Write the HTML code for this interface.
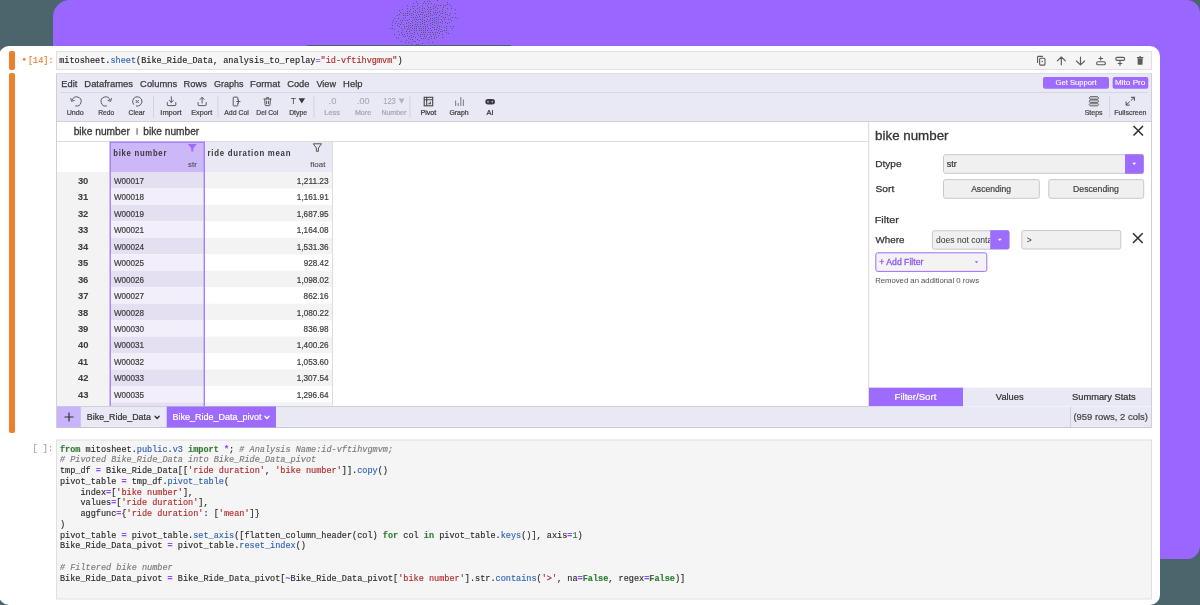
<!DOCTYPE html>
<html><head><meta charset="utf-8"><title>Mito</title>
<style>html,body{margin:0;padding:0;width:1200px;height:605px;overflow:hidden;background:#4b656d;font-family:"Liberation Sans",sans-serif}</style>
</head><body>
<svg width="1200" height="605" viewBox="0 0 1200 605" style="display:block;will-change:transform">
<rect x="0" y="0" width="1200" height="605" fill="#4b656d" />
<path d="M53,16.7 A16.7,16.7 0 0 1 69.7,0 L1186.8,0 A13.2,13.2 0 0 1 1200,13.2 L1200,545.8 A13.2,13.2 0 0 1 1186.8,559 L69.7,559 A16.7,16.7 0 0 1 53,542.3 Z" fill="#9966ff"/>
<path fill="#4d5f68" d="M409,36h1v1h-1zM430,25h1v1h-1zM449,15h1v1h-1zM432,22h1v1h-1zM427,30h1v1h-1zM417,8h1v1h-1zM430,18h1v1h-1zM425,38h1v1h-1zM403,24h1v1h-1zM424,15h1v1h-1zM434,22h1v1h-1zM431,30h1v1h-1zM422,23h1v1h-1zM445,22h1v1h-1zM430,7h1v1h-1zM415,12h1v1h-1zM415,17h1v1h-1zM413,14h1v1h-1zM425,3h1v1h-1zM419,7h1v1h-1zM413,11h1v1h-1zM412,33h1v1h-1zM428,11h1v1h-1zM435,10h1v1h-1zM423,26h1v1h-1zM420,26h1v1h-1zM434,25h1v1h-1zM411,30h1v1h-1zM440,22h1v1h-1zM412,25h1v1h-1zM426,36h1v1h-1zM442,23h1v1h-1zM446,30h1v1h-1zM427,26h1v1h-1zM406,23h1v1h-1zM404,34h1v1h-1zM415,37h1v1h-1zM427,24h1v1h-1zM424,17h1v1h-1zM425,30h1v1h-1zM437,27h1v1h-1zM424,34h1v1h-1zM418,14h1v1h-1zM446,26h1v1h-1zM403,18h1v1h-1zM423,32h1v1h-1zM406,26h1v1h-1zM414,28h1v1h-1zM422,17h1v1h-1zM409,11h1v1h-1zM432,32h1v1h-1zM429,37h1v1h-1zM425,11h1v1h-1zM420,22h1v1h-1zM431,9h1v1h-1zM415,21h1v1h-1zM423,3h1v1h-1zM415,24h1v1h-1zM442,11h1v1h-1zM416,30h1v1h-1zM407,29h1v1h-1zM392,28h1v1h-1zM446,32h1v1h-1zM428,16h1v1h-1zM401,28h1v1h-1zM407,20h1v1h-1zM416,28h1v1h-1zM445,14h1v1h-1zM399,26h1v1h-1zM401,22h1v1h-1zM407,33h1v1h-1zM394,29h1v1h-1zM408,22h1v1h-1zM441,16h1v1h-1zM410,27h1v1h-1zM430,13h1v1h-1zM426,16h1v1h-1zM412,22h1v1h-1zM419,28h1v1h-1zM401,41h1v1h-1zM421,32h1v1h-1zM436,17h1v1h-1zM423,12h1v1h-1zM422,6h1v1h-1zM424,24h1v1h-1zM451,20h1v1h-1zM401,32h1v1h-1zM433,34h1v1h-1zM420,19h1v1h-1zM427,19h1v1h-1zM413,17h1v1h-1zM437,12h1v1h-1zM398,23h1v1h-1zM400,20h1v1h-1zM420,24h1v1h-1zM449,22h1v1h-1zM435,7h1v1h-1zM421,38h1v1h-1zM414,32h1v1h-1zM419,16h1v1h-1zM431,3h1v1h-1zM422,34h1v1h-1zM416,19h1v1h-1zM442,13h1v1h-1zM413,8h1v1h-1zM399,34h1v1h-1zM410,9h1v1h-1zM453,26h1v1h-1zM427,9h1v1h-1zM424,22h1v1h-1zM405,36h1v1h-1zM442,21h1v1h-1zM419,11h1v1h-1zM439,26h1v1h-1zM408,38h1v1h-1zM410,39h1v1h-1zM436,37h1v1h-1zM431,38h1v1h-1zM418,35h1v1h-1zM428,21h1v1h-1zM430,20h1v1h-1zM438,22h1v1h-1zM422,8h1v1h-1zM422,19h1v1h-1zM430,28h1v1h-1zM443,17h1v1h-1zM414,26h1v1h-1zM428,39h1v1h-1zM411,35h1v1h-1zM419,30h1v1h-1zM413,3h1v1h-1zM408,42h1v1h-1zM417,24h1v1h-1zM409,19h1v1h-1zM417,5h1v1h-1zM450,18h1v1h-1zM445,17h1v1h-1zM430,34h1v1h-1zM420,34h1v1h-1zM405,42h1v1h-1zM447,2h1v1h-1zM402,30h1v1h-1zM433,12h1v1h-1zM434,18h1v1h-1zM419,9h1v1h-1zM411,17h1v1h-1zM408,25h1v1h-1zM390,28h1v1h-1zM412,6h1v1h-1zM411,15h1v1h-1zM432,27h1v1h-1zM405,17h1v1h-1zM412,20h1v1h-1zM402,34h1v1h-1zM432,18h1v1h-1zM404,28h1v1h-1zM425,26h1v1h-1zM402,9h1v1h-1zM405,15h1v1h-1zM426,14h1v1h-1zM441,26h1v1h-1zM452,28h1v1h-1zM443,5h1v1h-1zM439,11h1v1h-1zM447,23h1v1h-1zM409,29h1v1h-1zM411,43h1v1h-1zM441,29h1v1h-1zM421,30h1v1h-1zM436,14h1v1h-1zM452,17h1v1h-1zM402,20h1v1h-1zM395,23h1v1h-1zM424,20h1v1h-1zM433,6h1v1h-1zM440,5h1v1h-1zM442,9h1v1h-1zM406,31h1v1h-1zM429,1h1v1h-1zM417,22h1v1h-1zM414,6h1v1h-1zM455,13h1v1h-1zM437,25h1v1h-1zM425,28h1v1h-1zM415,41h1v1h-1zM407,8h1v1h-1zM435,32h1v1h-1zM447,14h1v1h-1zM428,3h1v1h-1zM430,32h1v1h-1zM428,32h1v1h-1zM437,0h1v1h-1zM430,23h1v1h-1zM392,22h1v1h-1zM416,26h1v1h-1zM417,39h1v1h-1zM422,10h1v1h-1zM441,19h1v1h-1zM426,21h1v1h-1zM410,23h1v1h-1zM416,44h1v1h-1zM399,10h1v1h-1zM436,19h1v1h-1zM417,17h1v1h-1zM418,44h1v1h-1zM417,33h1v1h-1zM445,5h1v1h-1zM422,14h1v1h-1zM439,33h1v1h-1zM444,27h1v1h-1zM434,36h1v1h-1zM417,3h1v1h-1zM409,14h1v1h-1zM397,15h1v1h-1zM436,23h1v1h-1zM444,19h1v1h-1zM410,33h1v1h-1zM394,34h1v1h-1zM424,1h1v1h-1zM415,10h1v1h-1zM407,15h1v1h-1zM427,1h1v1h-1zM403,36h1v1h-1zM405,20h1v1h-1zM416,15h1v1h-1zM418,19h1v1h-1zM405,13h1v1h-1zM438,35h1v1h-1zM438,17h1v1h-1zM436,21h1v1h-1zM393,20h1v1h-1zM434,20h1v1h-1zM403,15h1v1h-1zM411,37h1v1h-1zM412,28h1v1h-1zM432,15h1v1h-1zM438,5h1v1h-1zM419,40h1v1h-1zM430,15h1v1h-1zM442,37h1v1h-1zM407,11h1v1h-1zM436,29h1v1h-1zM434,38h1v1h-1zM442,31h1v1h-1zM439,28h1v1h-1zM396,37h1v1h-1zM437,32h1v1h-1zM425,32h1v1h-1zM448,19h1v1h-1zM418,26h1v1h-1zM451,6h1v1h-1zM421,28h1v1h-1zM411,13h1v1h-1zM398,31h1v1h-1zM438,30h1v1h-1zM437,8h1v1h-1zM432,24h1v1h-1zM412,39h1v1h-1zM438,19h1v1h-1zM450,13h1v1h-1zM450,26h1v1h-1zM407,13h1v1h-1zM413,41h1v1h-1zM422,21h1v1h-1zM428,7h1v1h-1zM414,34h1v1h-1zM434,29h1v1h-1zM400,12h1v1h-1zM423,38h1v1h-1zM439,15h1v1h-1zM455,17h1v1h-1zM394,18h1v1h-1zM409,31h1v1h-1zM435,12h1v1h-1zM428,13h1v1h-1zM413,36h1v1h-1zM435,34h1v1h-1zM432,42h1v1h-1zM421,12h1v1h-1zM408,27h1v1h-1zM442,34h1v1h-1zM417,12h1v1h-1zM436,5h1v1h-1zM455,9h1v1h-1zM403,13h1v1h-1zM396,21h1v1h-1zM428,28h1v1h-1zM414,19h1v1h-1zM428,42h1v1h-1zM444,30h1v1h-1zM422,43h1v1h-1zM446,28h1v1h-1zM407,5h1v1h-1zM449,4h1v1h-1zM416,1h1v1h-1zM440,31h1v1h-1zM424,36h1v1h-1zM443,7h1v1h-1zM407,35h1v1h-1zM414,30h1v1h-1zM398,18h1v1h-1zM434,27h1v1h-1zM404,26h1v1h-1zM400,24h1v1h-1zM423,28h1v1h-1zM432,20h1v1h-1zM424,8h1v1h-1zM397,25h1v1h-1zM427,34h1v1h-1zM420,14h1v1h-1zM431,36h1v1h-1zM398,38h1v1h-1zM447,4h1v1h-1zM448,33h1v1h-1zM445,12h1v1h-1zM457,18h1v1h-1zM451,8h1v1h-1zM447,8h1v1h-1zM423,30h1v1h-1zM433,8h1v1h-1zM430,11h1v1h-1zM392,25h1v1h-1zM420,36h1v1h-1zM429,9h1v1h-1zM434,14h1v1h-1zM440,13h1v1h-1zM399,14h1v1h-1zM410,25h1v1h-1zM406,40h1v1h-1zM434,4h1v1h-1zM427,5h1v1h-1z"/>
<rect x="307" y="45" width="204" height="1" fill="#4b656d" />
<rect x="-1" y="46" width="1161" height="559" fill="#ffffff" rx="10" />
<rect x="9" y="51" width="6" height="19" fill="#ee7f2d" rx="2" />
<text x="28.0" y="63.2" font-size="9.0" fill="#ec7d2e" stroke="#ec7d2e" stroke-width="0.15" font-family='"Liberation Mono", monospace' textLength="25.63" lengthAdjust="spacingAndGlyphs">[14]:</text>
<circle cx="24.2" cy="59.4" r="1.35" fill="#ec7d2e"/>
<rect x="56.5" y="51.5" width="1095" height="18" fill="#f5f5f5" stroke="#e0e0e0" stroke-width="1" />
<text x="59.19" y="62.8" font-size="9.0" font-family='"Liberation Mono", monospace' fill="#222" stroke="#222" stroke-width="0.15" textLength="343.43" lengthAdjust="spacingAndGlyphs">mitosheet.<tspan fill="#2f63b6" stroke="#2f63b6">sheet</tspan>(Bike_Ride_Data, analysis_to_replay<tspan fill="#8a4dff" stroke="#8a4dff">=</tspan><tspan fill="#b22b2b" stroke="#b22b2b">"id-vftihvgmvm"</tspan>)</text>
<g fill="none" stroke="#5c5c5c" stroke-width="1.1" stroke-linecap="round" stroke-linejoin="round">
<path d="M1037.6,62.4 L1037.6,57.2 Q1037.6,56.4 1038.4,56.4 L1042.4,56.4"/><rect x="1039.6" y="58.3" width="5.4" height="6.8" rx="1"/>
</g>
<circle cx="1042.2" cy="61.6" r="0.75" fill="#5c5c5c"/>
<g fill="none" stroke="#5c5c5c" stroke-width="1.15" stroke-linecap="round" stroke-linejoin="round">
<path d="M1061.3,64.8 L1061.3,57.3 M1057.3,60.8 L1061.3,57 L1065.4,60.8"/>
<path d="M1080.5,57.1 L1080.5,64.6 M1076.4,61 L1080.5,64.8 L1084.6,61"/>
<rect x="1096.7" y="61.7" width="8.6" height="3" rx="1.3"/><path d="M1100.7,56.7 L1100.7,59.9 M1099,58.5 L1102.6,58.5"/>
<rect x="1115.8" y="57.4" width="8.8" height="3" rx="1.3"/><path d="M1120,61.3 L1120,65.3 M1118.2,63.5 L1121.8,63.5"/>
</g>
<path d="M1137,57 L1143.3,57 L1143.3,58.2 L1137,58.2 Z M1139.2,56.2 L1141.1,56.2 L1141.1,57 L1139.2,57 Z M1137.6,58.6 L1142.7,58.6 L1142.5,64.3 Q1142.5,64.8 1142,64.8 L1138.2,64.8 Q1137.7,64.8 1137.7,64.3 Z" fill="#5c5c5c"/>
<rect x="9" y="73" width="6" height="360" fill="#ee7f2d" rx="2" />
<rect x="56.5" y="73.8" width="1095" height="353.7" fill="#ffffff" stroke="#cfcfd6" stroke-width="1" />
<rect x="57" y="74.3" width="1094" height="46.7" fill="#e9e9f6" />
<line x1="60" y1="92.5" x2="1148" y2="92.5" stroke="#d6d6e4" stroke-width="1"/>
<line x1="57" y1="121.5" x2="1151" y2="121.5" stroke="#d0d0d8" stroke-width="1"/>
<text x="61.34" y="87.1" font-size="9.0" fill="#3a3a3a" font-family='"Liberation Sans", sans-serif' stroke="#3a3a3a" stroke-width="0.25" textLength="15.98" lengthAdjust="spacingAndGlyphs" >Edit</text>
<text x="84.33" y="87.1" font-size="9.0" fill="#3a3a3a" font-family='"Liberation Sans", sans-serif' stroke="#3a3a3a" stroke-width="0.25" textLength="48.71" lengthAdjust="spacingAndGlyphs" >Dataframes</text>
<text x="140.12" y="87.1" font-size="9.0" fill="#3a3a3a" font-family='"Liberation Sans", sans-serif' stroke="#3a3a3a" stroke-width="0.25" textLength="37.02" lengthAdjust="spacingAndGlyphs" >Columns</text>
<text x="183.64" y="87.1" font-size="9.0" fill="#3a3a3a" font-family='"Liberation Sans", sans-serif' stroke="#3a3a3a" stroke-width="0.25" textLength="23.30" lengthAdjust="spacingAndGlyphs" >Rows</text>
<text x="214.05" y="87.1" font-size="9.0" fill="#3a3a3a" font-family='"Liberation Sans", sans-serif' stroke="#3a3a3a" stroke-width="0.25" textLength="29.58" lengthAdjust="spacingAndGlyphs" >Graphs</text>
<text x="250.12" y="87.1" font-size="9.0" fill="#3a3a3a" font-family='"Liberation Sans", sans-serif' stroke="#3a3a3a" stroke-width="0.25" textLength="30.05" lengthAdjust="spacingAndGlyphs" >Format</text>
<text x="287.23" y="87.1" font-size="9.0" fill="#3a3a3a" font-family='"Liberation Sans", sans-serif' stroke="#3a3a3a" stroke-width="0.25" textLength="22.18" lengthAdjust="spacingAndGlyphs" >Code</text>
<text x="316.46" y="87.1" font-size="9.0" fill="#3a3a3a" font-family='"Liberation Sans", sans-serif' stroke="#3a3a3a" stroke-width="0.25" textLength="19.52" lengthAdjust="spacingAndGlyphs" >View</text>
<text x="343.13" y="87.1" font-size="9.0" fill="#3a3a3a" font-family='"Liberation Sans", sans-serif' stroke="#3a3a3a" stroke-width="0.25" textLength="19.37" lengthAdjust="spacingAndGlyphs" >Help</text>
<rect x="1043" y="77" width="66" height="11.7" fill="#9d6cff" rx="2" />
<text x="1055.52" y="85.1" font-size="7.9" fill="#ffffff" font-family='"Liberation Sans", sans-serif' stroke="#ffffff" stroke-width="0.1" textLength="41.04" lengthAdjust="spacingAndGlyphs" >Get Support</text>
<rect x="1112.6" y="77" width="35.7" height="11.7" fill="#9d6cff" rx="2" />
<text x="1115.03" y="85.1" font-size="7.9" fill="#ffffff" font-family='"Liberation Sans", sans-serif' stroke="#ffffff" stroke-width="0.1" textLength="30.31" lengthAdjust="spacingAndGlyphs" >Mito Pro</text>
<text x="66.65" y="114.5" font-size="7.0" fill="#454545" font-family='"Liberation Sans", sans-serif' stroke="#454545" stroke-width="0.22" textLength="17.05" lengthAdjust="spacingAndGlyphs" >Undo</text>
<text x="98.15" y="114.5" font-size="7.0" fill="#454545" font-family='"Liberation Sans", sans-serif' stroke="#454545" stroke-width="0.22" textLength="16.03" lengthAdjust="spacingAndGlyphs" >Redo</text>
<text x="128.45" y="114.5" font-size="7.0" fill="#454545" font-family='"Liberation Sans", sans-serif' stroke="#454545" stroke-width="0.22" textLength="16.46" lengthAdjust="spacingAndGlyphs" >Clear</text>
<text x="160.31" y="114.5" font-size="7.0" fill="#454545" font-family='"Liberation Sans", sans-serif' stroke="#454545" stroke-width="0.22" textLength="21.25" lengthAdjust="spacingAndGlyphs" >Import</text>
<text x="191.21" y="114.5" font-size="7.0" fill="#454545" font-family='"Liberation Sans", sans-serif' stroke="#454545" stroke-width="0.22" textLength="20.95" lengthAdjust="spacingAndGlyphs" >Export</text>
<text x="224.29" y="114.5" font-size="7.0" fill="#454545" font-family='"Liberation Sans", sans-serif' stroke="#454545" stroke-width="0.22" textLength="24.47" lengthAdjust="spacingAndGlyphs" >Add Col</text>
<text x="256.35" y="114.5" font-size="7.0" fill="#454545" font-family='"Liberation Sans", sans-serif' stroke="#454545" stroke-width="0.22" textLength="22.00" lengthAdjust="spacingAndGlyphs" >Del Col</text>
<text x="289.14" y="114.5" font-size="7.0" fill="#454545" font-family='"Liberation Sans", sans-serif' stroke="#454545" stroke-width="0.22" textLength="17.97" lengthAdjust="spacingAndGlyphs" >Dtype</text>
<text x="324.39" y="114.5" font-size="7.0" fill="#a6a6ad" font-family='"Liberation Sans", sans-serif' stroke="#a6a6ad" stroke-width="0.22" textLength="15.62" lengthAdjust="spacingAndGlyphs" >Less</text>
<text x="354.91" y="114.5" font-size="7.0" fill="#a6a6ad" font-family='"Liberation Sans", sans-serif' stroke="#a6a6ad" stroke-width="0.22" textLength="16.31" lengthAdjust="spacingAndGlyphs" >More</text>
<text x="381.43" y="114.5" font-size="7.0" fill="#a6a6ad" font-family='"Liberation Sans", sans-serif' stroke="#a6a6ad" stroke-width="0.22" textLength="24.89" lengthAdjust="spacingAndGlyphs" >Number</text>
<text x="420.42" y="114.5" font-size="7.0" fill="#333" font-family='"Liberation Sans", sans-serif' stroke="#333" stroke-width="0.22" textLength="15.84" lengthAdjust="spacingAndGlyphs" >Pivot</text>
<text x="449.40" y="114.5" font-size="7.0" fill="#404040" font-family='"Liberation Sans", sans-serif' stroke="#404040" stroke-width="0.22" textLength="19.25" lengthAdjust="spacingAndGlyphs" >Graph</text>
<text x="486.59" y="114.5" font-size="7.0" fill="#333" font-family='"Liberation Sans", sans-serif' stroke="#333" stroke-width="0.22" textLength="7.11" lengthAdjust="spacingAndGlyphs" >AI</text>
<text x="1084.68" y="114.5" font-size="7.0" fill="#454545" font-family='"Liberation Sans", sans-serif' stroke="#454545" stroke-width="0.22" textLength="17.87" lengthAdjust="spacingAndGlyphs" >Steps</text>
<text x="1114.13" y="114.5" font-size="7.0" fill="#454545" font-family='"Liberation Sans", sans-serif' stroke="#454545" stroke-width="0.22" textLength="32.33" lengthAdjust="spacingAndGlyphs" >Fullscreen</text>
<line x1="153.5" y1="96" x2="153.5" y2="118" stroke="#d3d3de" stroke-width="1"/>
<line x1="218" y1="96" x2="218" y2="118" stroke="#d3d3de" stroke-width="1"/>
<line x1="314" y1="96" x2="314" y2="118" stroke="#d3d3de" stroke-width="1"/>
<line x1="410" y1="96" x2="410" y2="118" stroke="#d3d3de" stroke-width="1"/>
<line x1="1109.7" y1="96" x2="1109.7" y2="118" stroke="#d3d3de" stroke-width="1"/>
<g fill="none" stroke="#5a5a5a" stroke-width="1" stroke-linecap="round" stroke-linejoin="round">
<path d="M72.2,99.9 A4.6,4.6 0 1 1 75.7,106.0"/><path d="M70.8,98.5 L71.5,101.3 L74.3,100.5"/>
<path d="M110.0,99.9 A4.6,4.6 0 1 0 106.5,106.0"/><path d="M111.4,98.5 L110.7,101.3 L107.9,100.5"/>
<path d="M133.5,104.3 A4.7,4.7 0 1 1 136.4,106.1"/><path d="M136.0,100.3 L138.5,102.8 M138.5,100.3 L136.0,102.8"/>
<path d="M171.3,96.8 L171.3,102.4 M169.3,100.5 L171.3,102.5 L173.3,100.5 M167.3,102.5 L167.3,105 Q167.3,105.6 167.9,105.6 L175.2,105.6 Q175.8,105.6 175.8,105 L175.8,102.5"/>
<path d="M202.1,103 L202.1,97.4 M200.1,99.4 L202.1,97.4 L204.1,99.4 M198.1,102.5 L198.1,105 Q198.1,105.6 198.7,105.6 L205.6,105.6 Q206.2,105.6 206.2,105 L206.2,102.5"/>
<path d="M237.8,99.7 L237.8,97.6 Q237.8,97.1 237.3,97.1 L233.7,97.1 Q233.2,97.1 233.2,97.6 L233.2,105.4 Q233.2,105.9 233.7,105.9 L237.3,105.9 Q237.8,105.9 237.8,105.4 L237.8,103.3"/><path d="M236.7,101.5 L240.1,101.5 M238.4,99.8 L238.4,103.2"/>
<path d="M263.9,99 L271.2,99 M266.3,98.8 L266.5,97.6 L268.6,97.6 L268.8,98.8 M264.7,99.3 L265.1,105 Q265.2,105.7 265.9,105.7 L269.2,105.7 Q269.9,105.7 270,105 L270.4,99.3 M266.6,101.2 L266.6,103.8 M268.5,101.2 L268.5,103.8"/>
</g>
<text x="290.81" y="103.8" font-size="8.4" fill="#444" font-family='"Liberation Sans", sans-serif' textLength="5.19" lengthAdjust="spacingAndGlyphs" >T</text>
<path d="M298.5,98.2 L305.1,98.2 L301.8,103.6 Z" fill="#3a3a3a"/>
<text x="328.54" y="104.1" font-size="8.6" fill="#ababb2" font-family='"Liberation Sans", sans-serif' stroke="#ababb2" stroke-width="0.15" textLength="7.82" lengthAdjust="spacingAndGlyphs" >.0</text>
<text x="357.08" y="104.1" font-size="8.6" fill="#ababb2" font-family='"Liberation Sans", sans-serif' stroke="#ababb2" stroke-width="0.15" textLength="12.47" lengthAdjust="spacingAndGlyphs" >.00</text>
<text x="383.23" y="104.1" font-size="8.4" fill="#ababb2" font-family='"Liberation Sans", sans-serif' stroke="#ababb2" stroke-width="0.15" textLength="12.50" lengthAdjust="spacingAndGlyphs" >123</text>
<path d="M398.6,98.4 L404.6,98.4 L401.6,103.8 Z" fill="#b3b3b8"/>
<g fill="none" stroke="#444" stroke-width="1.1"><rect x="424.2" y="97.3" width="8.5" height="8.5"/><path d="M424.2,99.8 L432.7,99.8 M426.7,97.3 L426.7,105.8 M428.3,103.8 L430.3,103.8 L430.3,101.8"/></g>
<g fill="#8a8a8a"><rect x="455" y="100.5" width="1.2" height="5.5"/><rect x="457.6" y="103" width="1.2" height="3"/><rect x="460.2" y="97" width="1.2" height="9"/><rect x="462.8" y="99.5" width="1.2" height="6.5"/></g>
<rect x="485.3" y="99" width="9.7" height="5.5" fill="#3a3a3a" rx="2.75" />
<circle cx="488" cy="101.75" r="0.9" fill="#b48cff"/><circle cx="492.3" cy="101.75" r="0.9" fill="#b48cff"/>
<path d="M1090.2,96.6 L1097.6,96.6 L1098.7,97.95 L1097.6,99.3 L1090.2,99.3 L1089.1,97.95 Z" fill="#c9c9d2" stroke="#5e5e5e" stroke-width="0.9" stroke-linejoin="round"/>
<path d="M1090.2,99.9 L1097.6,99.9 L1098.7,101.25 L1097.6,102.6 L1090.2,102.6 L1089.1,101.25 Z" fill="#c9c9d2" stroke="#5e5e5e" stroke-width="0.9" stroke-linejoin="round"/>
<path d="M1090.2,103.2 L1097.6,103.2 L1098.7,104.55 L1097.6,105.9 L1090.2,105.9 L1089.1,104.55 Z" fill="#c9c9d2" stroke="#5e5e5e" stroke-width="0.9" stroke-linejoin="round"/>
<g fill="none" stroke="#4a4a4a" stroke-width="1" stroke-linecap="round" stroke-linejoin="round"><path d="M1126.3,104.9 L1129.4,102 M1131.1,100.4 L1134.2,97.4"/><path d="M1131.3,97.3 L1134.4,97.3 L1134.4,100.4"/><path d="M1126.1,101.9 L1126.1,105.1 L1129.3,105.1"/></g>
<text x="73.64" y="135.0" font-size="10.3" fill="#353535" font-family='"Liberation Sans", sans-serif' stroke="#353535" stroke-width="0.3" textLength="56.23" lengthAdjust="spacingAndGlyphs" >bike number</text>
<rect x="136.4" y="128.2" width="1.3" height="6.6" fill="#7a7a7a" />
<text x="143.35" y="135.0" font-size="10.3" fill="#353535" font-family='"Liberation Sans", sans-serif' stroke="#353535" stroke-width="0.3" textLength="55.82" lengthAdjust="spacingAndGlyphs" >bike number</text>
<line x1="57" y1="141.5" x2="869" y2="141.5" stroke="#dedede" stroke-width="1"/>
<rect x="57" y="172.0" width="52.5" height="234.5" fill="#f3f3f3" />
<rect x="110" y="172.0" width="94" height="16.46" fill="#e4dff1" />
<rect x="205" y="172.0" width="127.6" height="16.46" fill="#f3f3f3" />
<text x="77.90" y="183.85" font-size="9.9" fill="#3c3c3c" font-family='"Liberation Sans", sans-serif' font-weight="bold" stroke="#3c3c3c" stroke-width="0.05" textLength="10.46" lengthAdjust="spacingAndGlyphs" >30</text>
<text x="113.96" y="183.85" font-size="9.9" fill="#3d3d3d" font-family='"Liberation Sans", sans-serif' stroke="#3d3d3d" stroke-width="0.22" textLength="30.13" lengthAdjust="spacingAndGlyphs" >W00017</text>
<text x="296.79" y="183.85" font-size="9.9" fill="#3d3d3d" font-family='"Liberation Sans", sans-serif' stroke="#3d3d3d" stroke-width="0.22" textLength="31.87" lengthAdjust="spacingAndGlyphs" >1,211.23</text>
<rect x="110" y="188.46" width="94" height="16.46" fill="#f2effb" />
<text x="77.84" y="200.31" font-size="9.9" fill="#3c3c3c" font-family='"Liberation Sans", sans-serif' font-weight="bold" stroke="#3c3c3c" stroke-width="0.05" textLength="10.46" lengthAdjust="spacingAndGlyphs" >31</text>
<text x="113.96" y="200.31" font-size="9.9" fill="#3d3d3d" font-family='"Liberation Sans", sans-serif' stroke="#3d3d3d" stroke-width="0.22" textLength="30.13" lengthAdjust="spacingAndGlyphs" >W00018</text>
<text x="296.83" y="200.31" font-size="9.9" fill="#3d3d3d" font-family='"Liberation Sans", sans-serif' stroke="#3d3d3d" stroke-width="0.22" textLength="31.87" lengthAdjust="spacingAndGlyphs" >1,161.91</text>
<rect x="110" y="204.92000000000002" width="94" height="16.46" fill="#e4dff1" />
<rect x="205" y="204.92000000000002" width="127.6" height="16.46" fill="#f3f3f3" />
<text x="77.90" y="216.77" font-size="9.9" fill="#3c3c3c" font-family='"Liberation Sans", sans-serif' font-weight="bold" stroke="#3c3c3c" stroke-width="0.05" textLength="10.46" lengthAdjust="spacingAndGlyphs" >32</text>
<text x="113.96" y="216.77" font-size="9.9" fill="#3d3d3d" font-family='"Liberation Sans", sans-serif' stroke="#3d3d3d" stroke-width="0.22" textLength="30.13" lengthAdjust="spacingAndGlyphs" >W00019</text>
<text x="296.77" y="216.77" font-size="9.9" fill="#3d3d3d" font-family='"Liberation Sans", sans-serif' stroke="#3d3d3d" stroke-width="0.22" textLength="31.87" lengthAdjust="spacingAndGlyphs" >1,687.95</text>
<rect x="110" y="221.38" width="94" height="16.46" fill="#f2effb" />
<text x="77.88" y="233.23" font-size="9.9" fill="#3c3c3c" font-family='"Liberation Sans", sans-serif' font-weight="bold" stroke="#3c3c3c" stroke-width="0.05" textLength="10.46" lengthAdjust="spacingAndGlyphs" >33</text>
<text x="113.96" y="233.23" font-size="9.9" fill="#3d3d3d" font-family='"Liberation Sans", sans-serif' stroke="#3d3d3d" stroke-width="0.22" textLength="30.13" lengthAdjust="spacingAndGlyphs" >W00021</text>
<text x="296.79" y="233.23" font-size="9.9" fill="#3d3d3d" font-family='"Liberation Sans", sans-serif' stroke="#3d3d3d" stroke-width="0.22" textLength="31.87" lengthAdjust="spacingAndGlyphs" >1,164.08</text>
<rect x="110" y="237.84" width="94" height="16.46" fill="#e4dff1" />
<rect x="205" y="237.84" width="127.6" height="16.46" fill="#f3f3f3" />
<text x="77.74" y="249.69" font-size="9.9" fill="#3c3c3c" font-family='"Liberation Sans", sans-serif' font-weight="bold" stroke="#3c3c3c" stroke-width="0.05" textLength="10.46" lengthAdjust="spacingAndGlyphs" >34</text>
<text x="113.96" y="249.69" font-size="9.9" fill="#3d3d3d" font-family='"Liberation Sans", sans-serif' stroke="#3d3d3d" stroke-width="0.22" textLength="30.13" lengthAdjust="spacingAndGlyphs" >W00024</text>
<text x="296.79" y="249.69" font-size="9.9" fill="#3d3d3d" font-family='"Liberation Sans", sans-serif' stroke="#3d3d3d" stroke-width="0.22" textLength="31.87" lengthAdjust="spacingAndGlyphs" >1,531.36</text>
<rect x="110" y="254.3" width="94" height="16.46" fill="#f2effb" />
<text x="77.84" y="266.15" font-size="9.9" fill="#3c3c3c" font-family='"Liberation Sans", sans-serif' font-weight="bold" stroke="#3c3c3c" stroke-width="0.05" textLength="10.46" lengthAdjust="spacingAndGlyphs" >35</text>
<text x="113.96" y="266.15" font-size="9.9" fill="#3d3d3d" font-family='"Liberation Sans", sans-serif' stroke="#3d3d3d" stroke-width="0.22" textLength="30.13" lengthAdjust="spacingAndGlyphs" >W00025</text>
<text x="303.67" y="266.15" font-size="9.9" fill="#3d3d3d" font-family='"Liberation Sans", sans-serif' stroke="#3d3d3d" stroke-width="0.22" textLength="25.04" lengthAdjust="spacingAndGlyphs" >928.42</text>
<rect x="110" y="270.76" width="94" height="16.46" fill="#e4dff1" />
<rect x="205" y="270.76" width="127.6" height="16.46" fill="#f3f3f3" />
<text x="77.88" y="282.61" font-size="9.9" fill="#3c3c3c" font-family='"Liberation Sans", sans-serif' font-weight="bold" stroke="#3c3c3c" stroke-width="0.05" textLength="10.46" lengthAdjust="spacingAndGlyphs" >36</text>
<text x="113.96" y="282.61" font-size="9.9" fill="#3d3d3d" font-family='"Liberation Sans", sans-serif' stroke="#3d3d3d" stroke-width="0.22" textLength="30.13" lengthAdjust="spacingAndGlyphs" >W00026</text>
<text x="296.84" y="282.61" font-size="9.9" fill="#3d3d3d" font-family='"Liberation Sans", sans-serif' stroke="#3d3d3d" stroke-width="0.22" textLength="31.87" lengthAdjust="spacingAndGlyphs" >1,098.02</text>
<rect x="110" y="287.22" width="94" height="16.46" fill="#f2effb" />
<text x="77.92" y="299.07" font-size="9.9" fill="#3c3c3c" font-family='"Liberation Sans", sans-serif' font-weight="bold" stroke="#3c3c3c" stroke-width="0.05" textLength="10.46" lengthAdjust="spacingAndGlyphs" >37</text>
<text x="113.96" y="299.07" font-size="9.9" fill="#3d3d3d" font-family='"Liberation Sans", sans-serif' stroke="#3d3d3d" stroke-width="0.22" textLength="30.13" lengthAdjust="spacingAndGlyphs" >W00027</text>
<text x="303.62" y="299.07" font-size="9.9" fill="#3d3d3d" font-family='"Liberation Sans", sans-serif' stroke="#3d3d3d" stroke-width="0.22" textLength="25.04" lengthAdjust="spacingAndGlyphs" >862.16</text>
<rect x="110" y="303.68" width="94" height="16.46" fill="#e4dff1" />
<rect x="205" y="303.68" width="127.6" height="16.46" fill="#f3f3f3" />
<text x="77.86" y="315.53" font-size="9.9" fill="#3c3c3c" font-family='"Liberation Sans", sans-serif' font-weight="bold" stroke="#3c3c3c" stroke-width="0.05" textLength="10.46" lengthAdjust="spacingAndGlyphs" >38</text>
<text x="113.96" y="315.53" font-size="9.9" fill="#3d3d3d" font-family='"Liberation Sans", sans-serif' stroke="#3d3d3d" stroke-width="0.22" textLength="30.13" lengthAdjust="spacingAndGlyphs" >W00028</text>
<text x="296.84" y="315.53" font-size="9.9" fill="#3d3d3d" font-family='"Liberation Sans", sans-serif' stroke="#3d3d3d" stroke-width="0.22" textLength="31.87" lengthAdjust="spacingAndGlyphs" >1,080.22</text>
<rect x="110" y="320.14" width="94" height="16.46" fill="#f2effb" />
<text x="77.89" y="331.99" font-size="9.9" fill="#3c3c3c" font-family='"Liberation Sans", sans-serif' font-weight="bold" stroke="#3c3c3c" stroke-width="0.05" textLength="10.46" lengthAdjust="spacingAndGlyphs" >39</text>
<text x="113.96" y="331.99" font-size="9.9" fill="#3d3d3d" font-family='"Liberation Sans", sans-serif' stroke="#3d3d3d" stroke-width="0.22" textLength="30.13" lengthAdjust="spacingAndGlyphs" >W00030</text>
<text x="303.61" y="331.99" font-size="9.9" fill="#3d3d3d" font-family='"Liberation Sans", sans-serif' stroke="#3d3d3d" stroke-width="0.22" textLength="25.04" lengthAdjust="spacingAndGlyphs" >836.98</text>
<rect x="110" y="336.6" width="94" height="16.46" fill="#e4dff1" />
<rect x="205" y="336.6" width="127.6" height="16.46" fill="#f3f3f3" />
<text x="77.94" y="348.45" font-size="9.9" fill="#3c3c3c" font-family='"Liberation Sans", sans-serif' font-weight="bold" stroke="#3c3c3c" stroke-width="0.05" textLength="10.46" lengthAdjust="spacingAndGlyphs" >40</text>
<text x="113.96" y="348.45" font-size="9.9" fill="#3d3d3d" font-family='"Liberation Sans", sans-serif' stroke="#3d3d3d" stroke-width="0.22" textLength="30.13" lengthAdjust="spacingAndGlyphs" >W00031</text>
<text x="296.79" y="348.45" font-size="9.9" fill="#3d3d3d" font-family='"Liberation Sans", sans-serif' stroke="#3d3d3d" stroke-width="0.22" textLength="31.87" lengthAdjust="spacingAndGlyphs" >1,400.26</text>
<rect x="110" y="353.06" width="94" height="16.46" fill="#f2effb" />
<text x="77.88" y="364.91" font-size="9.9" fill="#3c3c3c" font-family='"Liberation Sans", sans-serif' font-weight="bold" stroke="#3c3c3c" stroke-width="0.05" textLength="10.46" lengthAdjust="spacingAndGlyphs" >41</text>
<text x="113.96" y="364.91" font-size="9.9" fill="#3d3d3d" font-family='"Liberation Sans", sans-serif' stroke="#3d3d3d" stroke-width="0.22" textLength="30.13" lengthAdjust="spacingAndGlyphs" >W00032</text>
<text x="296.75" y="364.91" font-size="9.9" fill="#3d3d3d" font-family='"Liberation Sans", sans-serif' stroke="#3d3d3d" stroke-width="0.22" textLength="31.87" lengthAdjust="spacingAndGlyphs" >1,053.60</text>
<rect x="110" y="369.52" width="94" height="16.46" fill="#e4dff1" />
<rect x="205" y="369.52" width="127.6" height="16.46" fill="#f3f3f3" />
<text x="77.94" y="381.37" font-size="9.9" fill="#3c3c3c" font-family='"Liberation Sans", sans-serif' font-weight="bold" stroke="#3c3c3c" stroke-width="0.05" textLength="10.46" lengthAdjust="spacingAndGlyphs" >42</text>
<text x="113.96" y="381.37" font-size="9.9" fill="#3d3d3d" font-family='"Liberation Sans", sans-serif' stroke="#3d3d3d" stroke-width="0.22" textLength="30.13" lengthAdjust="spacingAndGlyphs" >W00033</text>
<text x="296.67" y="381.37" font-size="9.9" fill="#3d3d3d" font-family='"Liberation Sans", sans-serif' stroke="#3d3d3d" stroke-width="0.22" textLength="31.87" lengthAdjust="spacingAndGlyphs" >1,307.54</text>
<rect x="110" y="385.98" width="94" height="16.46" fill="#f2effb" />
<text x="77.92" y="397.83" font-size="9.9" fill="#3c3c3c" font-family='"Liberation Sans", sans-serif' font-weight="bold" stroke="#3c3c3c" stroke-width="0.05" textLength="10.46" lengthAdjust="spacingAndGlyphs" >43</text>
<text x="113.96" y="397.83" font-size="9.9" fill="#3d3d3d" font-family='"Liberation Sans", sans-serif' stroke="#3d3d3d" stroke-width="0.22" textLength="30.13" lengthAdjust="spacingAndGlyphs" >W00035</text>
<text x="296.67" y="397.83" font-size="9.9" fill="#3d3d3d" font-family='"Liberation Sans", sans-serif' stroke="#3d3d3d" stroke-width="0.22" textLength="31.87" lengthAdjust="spacingAndGlyphs" >1,296.64</text>
<rect x="110" y="402.44" width="94" height="4.060000000000002" fill="#e4dff1" />
<rect x="205" y="402.44" width="127.6" height="4.060000000000002" fill="#f3f3f3" />
<rect x="110" y="142" width="94.3" height="30" fill="#ccb8f9" />
<rect x="205" y="142" width="127.6" height="30" fill="#e9e9f5" />
<text x="113.19" y="155.8" font-size="9.4" fill="#383838" font-family='"Liberation Sans", sans-serif' font-weight="bold" letter-spacing="0.9" textLength="53.96" lengthAdjust="spacingAndGlyphs" >bike number</text>
<text x="188.08" y="167.2" font-size="7.4" fill="#555" font-family='"Liberation Sans", sans-serif' stroke="#555" stroke-width="0.15" textLength="8.75" lengthAdjust="spacingAndGlyphs" >str</text>
<path d="M187.8,144 L196.8,144 L193.3,148.5 L193.3,151.5 L191.3,151.5 L191.3,148.5 Z" fill="#9d6cff"/>
<text x="207.49" y="155.7" font-size="9.4" fill="#383838" font-family='"Liberation Sans", sans-serif' font-weight="bold" letter-spacing="0.9" textLength="83.75" lengthAdjust="spacingAndGlyphs" >ride duration mean</text>
<text x="310.29" y="167.1" font-size="7.6" fill="#555" font-family='"Liberation Sans", sans-serif' stroke="#555" stroke-width="0.15" textLength="15.07" lengthAdjust="spacingAndGlyphs" >float</text>
<path d="M313.3,143.8 L321.5,143.8 L318.4,148 L318.4,151.3 L316.4,151.3 L316.4,148 Z" fill="none" stroke="#444" stroke-width="0.9" stroke-linejoin="round"/>
<line x1="332.5" y1="142" x2="332.5" y2="406.5" stroke="#dedede" stroke-width="1"/>
<rect x="110.2" y="142.2" width="94.1" height="280" fill="none" stroke="#a57dfd" stroke-width="1.4"/>
<rect x="57" y="406.5" width="1094" height="21" fill="#e9e9f5" />
<line x1="57" y1="406.5" x2="869" y2="406.5" stroke="#d0d0d6" stroke-width="1"/>
<line x1="57" y1="427.5" x2="1151" y2="427.5" stroke="#c9c9d3" stroke-width="1"/>
<rect x="57" y="406.5" width="23.8" height="21" fill="#c8b4fb" />
<path d="M64.5,417 L73.5,417 M69,412.5 L69,421.5" stroke="#333" stroke-width="1.2"/>
<text x="86.87" y="420.3" font-size="9.2" fill="#333" font-family='"Liberation Sans", sans-serif' stroke="#333" stroke-width="0.22" textLength="64.03" lengthAdjust="spacingAndGlyphs" >Bike_Ride_Data</text>
<path d="M155,416.3 L157.1,418.5 L159.2,416.3" fill="none" stroke="#333" stroke-width="1.3" stroke-linecap="round" stroke-linejoin="round"/>
<rect x="166.7" y="406.5" width="109.3" height="21" fill="#9d6cff" />
<text x="172.56" y="420.3" font-size="9.2" fill="#ffffff" font-family='"Liberation Sans", sans-serif' stroke="#ffffff" stroke-width="0.2" textLength="89.00" lengthAdjust="spacingAndGlyphs" >Bike_Ride_Data_pivot</text>
<path d="M264.8,416.3 L266.9,418.5 L269,416.3" fill="none" stroke="#fff" stroke-width="1.3" stroke-linecap="round" stroke-linejoin="round"/>
<line x1="1070.6" y1="406.5" x2="1070.6" y2="427.5" stroke="#d0d0da" stroke-width="1"/>
<text x="1073.41" y="419.8" font-size="9.0" fill="#444" font-family='"Liberation Sans", sans-serif' stroke="#444" stroke-width="0.2" textLength="74.47" lengthAdjust="spacingAndGlyphs" >(959 rows, 2 cols)</text>
<line x1="868.7" y1="121.5" x2="868.7" y2="406.5" stroke="#d8d8d8" stroke-width="1"/>
<text x="875.14" y="139.7" font-size="12.8" fill="#353535" font-family='"Liberation Sans", sans-serif' stroke="#353535" stroke-width="0.3" textLength="73.38" lengthAdjust="spacingAndGlyphs" >bike number</text>
<path d="M1133.5,126 L1143,135.5 M1143,126 L1133.5,135.5" stroke="#333" stroke-width="1.6"/>
<text x="875.17" y="167" font-size="9.6" fill="#353535" font-family='"Liberation Sans", sans-serif' stroke="#353535" stroke-width="0.25" textLength="26.38" lengthAdjust="spacingAndGlyphs" >Dtype</text>
<rect x="943.5" y="154.7" width="200" height="18.6" fill="#f0f0f0" rx="2" stroke="#c8c8c8" stroke-width="1" />
<path d="M1125,154.2 L1141.7,154.2 Q1143.7,154.2 1143.7,156.2 L1143.7,171.8 Q1143.7,173.8 1141.7,173.8 L1125,173.8 Z" fill="#9d6cff"/>
<path d="M1132.3,162.7 L1136.1,162.7 L1134.2,165 Z" fill="#fff"/>
<text x="946.75" y="167" font-size="8.8" fill="#333" font-family='"Liberation Sans", sans-serif' stroke="#333" stroke-width="0.2" textLength="10.00" lengthAdjust="spacingAndGlyphs" >str</text>
<text x="875.54" y="192" font-size="9.6" fill="#353535" font-family='"Liberation Sans", sans-serif' stroke="#353535" stroke-width="0.25" textLength="18.74" lengthAdjust="spacingAndGlyphs" >Sort</text>
<rect x="943.5" y="179.6" width="95.8" height="18.7" fill="#f0f0f0" rx="2" stroke="#c8c8c8" stroke-width="1" />
<text x="971.18" y="191.8" font-size="8.4" fill="#444" font-family='"Liberation Sans", sans-serif' stroke="#444" stroke-width="0.2" textLength="39.87" lengthAdjust="spacingAndGlyphs" >Ascending</text>
<rect x="1048.8" y="179.6" width="94.9" height="18.7" fill="#f0f0f0" rx="2" stroke="#c8c8c8" stroke-width="1" />
<text x="1073.09" y="191.8" font-size="8.4" fill="#444" font-family='"Liberation Sans", sans-serif' stroke="#444" stroke-width="0.2" textLength="45.67" lengthAdjust="spacingAndGlyphs" >Descending</text>
<text x="874.71" y="222.6" font-size="9.6" fill="#353535" font-family='"Liberation Sans", sans-serif' stroke="#353535" stroke-width="0.25" textLength="24.17" lengthAdjust="spacingAndGlyphs" >Filter</text>
<text x="875.56" y="243" font-size="9.6" fill="#353535" font-family='"Liberation Sans", sans-serif' stroke="#353535" stroke-width="0.25" textLength="28.78" lengthAdjust="spacingAndGlyphs" >Where</text>
<rect x="932.4" y="230.8" width="77" height="18.4" fill="#f0f0f0" rx="2" stroke="#c8c8c8" stroke-width="1" />
<clipPath id="wc"><rect x="933" y="231" width="57" height="18"/></clipPath>
<text x="935.9" y="243" font-size="8.6" fill="#333" font-family='"Liberation Sans", sans-serif' clip-path="url(#wc)">does not contains</text>
<path d="M990.2,230.3 L1007.3,230.3 Q1009.3,230.3 1009.3,232.3 L1009.3,247.2 Q1009.3,249.2 1007.3,249.2 L990.2,249.2 Z" fill="#9d6cff"/>
<path d="M997.9,238.8 L1001.7,238.8 L999.8,241.1 Z" fill="#fff"/>
<rect x="1021.8" y="230.5" width="99" height="18.5" fill="#f0f0f0" rx="2" stroke="#c8c8c8" stroke-width="1" />
<text x="1026.7" y="243" font-size="8.6" fill="#333" font-family='"Liberation Sans", sans-serif' >&gt;</text>
<path d="M1133,233.3 L1142.7,243 M1142.7,233.3 L1133,243" stroke="#333" stroke-width="1.6"/>
<rect x="875.8" y="252.8" width="111" height="18.6" fill="#f3f3f3" rx="2" stroke="#9d6cff" stroke-width="1" />
<text x="879.38" y="264.5" font-size="8.6" fill="#8e5cf7" font-family='"Liberation Sans", sans-serif' stroke="#8e5cf7" stroke-width="0.35" textLength="43.96" lengthAdjust="spacingAndGlyphs" >+ Add Filter</text>
<path d="M974.8,261.2 L978.2,261.2 L976.5,263.2 Z" fill="#8e5cf7"/>
<text x="875.17" y="283.1" font-size="7.8" fill="#5a5a5a" font-family='"Liberation Sans", sans-serif' stroke="#5a5a5a" stroke-width="0.05" textLength="103.86" lengthAdjust="spacingAndGlyphs" >Removed an additional 0 rows</text>
<rect x="869" y="387.7" width="282" height="18.5" fill="#e9e9f5" />
<rect x="869" y="387.7" width="94" height="18.5" fill="#9d6cff" />
<text x="894.51" y="400.2" font-size="9.0" fill="#fff" font-family='"Liberation Sans", sans-serif' stroke="#fff" stroke-width="0.2" textLength="41.86" lengthAdjust="spacingAndGlyphs" >Filter/Sort</text>
<text x="995.86" y="400.2" font-size="9.0" fill="#333" font-family='"Liberation Sans", sans-serif' stroke="#333" stroke-width="0.22" textLength="27.77" lengthAdjust="spacingAndGlyphs" >Values</text>
<text x="1071.98" y="400.2" font-size="9.0" fill="#333" font-family='"Liberation Sans", sans-serif' stroke="#333" stroke-width="0.22" textLength="63.76" lengthAdjust="spacingAndGlyphs" >Summary Stats</text>
<text x="32.6" y="451.2" font-size="9.0" fill="#a0a0a0" stroke="#a0a0a0" stroke-width="0.1" font-family='"Liberation Mono", monospace' textLength="20.50" lengthAdjust="spacingAndGlyphs" xml:space="preserve" style="white-space:pre">[ ]:</text>
<rect x="56.5" y="440" width="1095" height="159" fill="#f5f5f5" stroke="#e0e0e0" stroke-width="1" />
<text x="59.9" y="451.60" font-size="9.0" font-family='"Liberation Mono", monospace' fill="#2a2a2a" stroke-width="0.15" xml:space="preserve" style="white-space:pre" textLength="333.18" lengthAdjust="spacingAndGlyphs"><tspan fill="#2e7d32" stroke="#2e7d32" font-weight="bold">from</tspan><tspan stroke="#2a2a2a"> mitosheet.</tspan><tspan fill="#2f63b6" stroke="#2f63b6">public</tspan><tspan stroke="#2a2a2a">.</tspan><tspan fill="#2f63b6" stroke="#2f63b6">v3</tspan><tspan stroke="#2a2a2a"> </tspan><tspan fill="#2e7d32" stroke="#2e7d32" font-weight="bold">import</tspan><tspan stroke="#2a2a2a"> </tspan><tspan fill="#8a4dff" stroke="#8a4dff" font-weight="bold">*</tspan><tspan stroke="#2a2a2a">; </tspan><tspan fill="#7a7a7a" stroke="#7a7a7a" font-style="italic"># Analysis Name:id-vftihvgmvm;</tspan></text>
<text x="59.9" y="462.36" font-size="9.0" font-family='"Liberation Mono", monospace' fill="#2a2a2a" stroke-width="0.15" xml:space="preserve" style="white-space:pre" textLength="256.29" lengthAdjust="spacingAndGlyphs"><tspan fill="#7a7a7a" stroke="#7a7a7a" font-style="italic"># Pivoted Bike_Ride_Data into Bike_Ride_Data_pivot</tspan></text>
<text x="59.9" y="473.12" font-size="9.0" font-family='"Liberation Mono", monospace' fill="#2a2a2a" stroke-width="0.15" xml:space="preserve" style="white-space:pre" textLength="328.05" lengthAdjust="spacingAndGlyphs"><tspan stroke="#2a2a2a">tmp_df </tspan><tspan fill="#8a4dff" stroke="#8a4dff" font-weight="bold">=</tspan><tspan stroke="#2a2a2a"> Bike_Ride_Data[[</tspan><tspan fill="#b22b2b" stroke="#b22b2b">&#x27;ride duration&#x27;</tspan><tspan stroke="#2a2a2a">, </tspan><tspan fill="#b22b2b" stroke="#b22b2b">&#x27;bike number&#x27;</tspan><tspan stroke="#2a2a2a">]].</tspan><tspan fill="#2f63b6" stroke="#2f63b6">copy</tspan><tspan stroke="#2a2a2a">()</tspan></text>
<text x="59.9" y="483.88" font-size="9.0" font-family='"Liberation Mono", monospace' fill="#2a2a2a" stroke-width="0.15" xml:space="preserve" style="white-space:pre" textLength="169.15" lengthAdjust="spacingAndGlyphs"><tspan stroke="#2a2a2a">pivot_table </tspan><tspan fill="#8a4dff" stroke="#8a4dff" font-weight="bold">=</tspan><tspan stroke="#2a2a2a"> tmp_df.</tspan><tspan fill="#2f63b6" stroke="#2f63b6">pivot_table</tspan><tspan stroke="#2a2a2a">(</tspan></text>
<text x="59.9" y="494.64" font-size="9.0" font-family='"Liberation Mono", monospace' fill="#2a2a2a" stroke-width="0.15" xml:space="preserve" style="white-space:pre" textLength="133.27" lengthAdjust="spacingAndGlyphs"><tspan stroke="#2a2a2a">    index</tspan><tspan fill="#8a4dff" stroke="#8a4dff" font-weight="bold">=</tspan><tspan stroke="#2a2a2a">[</tspan><tspan fill="#b22b2b" stroke="#b22b2b">&#x27;bike number&#x27;</tspan><tspan stroke="#2a2a2a">],</tspan></text>
<text x="59.9" y="505.40" font-size="9.0" font-family='"Liberation Mono", monospace' fill="#2a2a2a" stroke-width="0.15" xml:space="preserve" style="white-space:pre" textLength="148.65" lengthAdjust="spacingAndGlyphs"><tspan stroke="#2a2a2a">    values</tspan><tspan fill="#8a4dff" stroke="#8a4dff" font-weight="bold">=</tspan><tspan stroke="#2a2a2a">[</tspan><tspan fill="#b22b2b" stroke="#b22b2b">&#x27;ride duration&#x27;</tspan><tspan stroke="#2a2a2a">],</tspan></text>
<text x="59.9" y="516.16" font-size="9.0" font-family='"Liberation Mono", monospace' fill="#2a2a2a" stroke-width="0.15" xml:space="preserve" style="white-space:pre" textLength="199.91" lengthAdjust="spacingAndGlyphs"><tspan stroke="#2a2a2a">    aggfunc</tspan><tspan fill="#8a4dff" stroke="#8a4dff" font-weight="bold">=</tspan><tspan stroke="#2a2a2a">{</tspan><tspan fill="#b22b2b" stroke="#b22b2b">&#x27;ride duration&#x27;</tspan><tspan stroke="#2a2a2a">: [</tspan><tspan fill="#b22b2b" stroke="#b22b2b">&#x27;mean&#x27;</tspan><tspan stroke="#2a2a2a">]}</tspan></text>
<text x="59.9" y="526.92" font-size="9.0" font-family='"Liberation Mono", monospace' fill="#2a2a2a" stroke-width="0.15" xml:space="preserve" style="white-space:pre" textLength="5.13" lengthAdjust="spacingAndGlyphs"><tspan stroke="#2a2a2a">)</tspan></text>
<text x="59.9" y="537.68" font-size="9.0" font-family='"Liberation Mono", monospace' fill="#2a2a2a" stroke-width="0.15" xml:space="preserve" style="white-space:pre" textLength="522.83" lengthAdjust="spacingAndGlyphs"><tspan stroke="#2a2a2a">pivot_table </tspan><tspan fill="#8a4dff" stroke="#8a4dff" font-weight="bold">=</tspan><tspan stroke="#2a2a2a"> pivot_table.</tspan><tspan fill="#2f63b6" stroke="#2f63b6">set_axis</tspan><tspan stroke="#2a2a2a">([flatten_column_header(col) </tspan><tspan fill="#2e7d32" stroke="#2e7d32" font-weight="bold">for</tspan><tspan stroke="#2a2a2a"> col </tspan><tspan fill="#2e7d32" stroke="#2e7d32" font-weight="bold">in</tspan><tspan stroke="#2a2a2a"> pivot_table.</tspan><tspan fill="#2f63b6" stroke="#2f63b6">keys</tspan><tspan stroke="#2a2a2a">()], axis</tspan><tspan fill="#8a4dff" stroke="#8a4dff" font-weight="bold">=</tspan><tspan fill="#2e7d32" stroke="#2e7d32">1</tspan><tspan stroke="#2a2a2a">)</tspan></text>
<text x="59.9" y="548.44" font-size="9.0" font-family='"Liberation Mono", monospace' fill="#2a2a2a" stroke-width="0.15" xml:space="preserve" style="white-space:pre" textLength="246.04" lengthAdjust="spacingAndGlyphs"><tspan stroke="#2a2a2a">Bike_Ride_Data_pivot </tspan><tspan fill="#8a4dff" stroke="#8a4dff" font-weight="bold">=</tspan><tspan stroke="#2a2a2a"> pivot_table.</tspan><tspan fill="#2f63b6" stroke="#2f63b6">reset_index</tspan><tspan stroke="#2a2a2a">()</tspan></text>
<text x="59.9" y="569.96" font-size="9.0" font-family='"Liberation Mono", monospace' fill="#2a2a2a" stroke-width="0.15" xml:space="preserve" style="white-space:pre" textLength="112.77" lengthAdjust="spacingAndGlyphs"><tspan fill="#7a7a7a" stroke="#7a7a7a" font-style="italic"># Filtered bike number</tspan></text>
<text x="59.9" y="580.72" font-size="9.0" font-family='"Liberation Mono", monospace' fill="#2a2a2a" stroke-width="0.15" xml:space="preserve" style="white-space:pre" textLength="625.35" lengthAdjust="spacingAndGlyphs"><tspan stroke="#2a2a2a">Bike_Ride_Data_pivot </tspan><tspan fill="#8a4dff" stroke="#8a4dff" font-weight="bold">=</tspan><tspan stroke="#2a2a2a"> Bike_Ride_Data_pivot[</tspan><tspan fill="#8a4dff" stroke="#8a4dff" font-weight="bold">~</tspan><tspan stroke="#2a2a2a">Bike_Ride_Data_pivot[</tspan><tspan fill="#b22b2b" stroke="#b22b2b">&#x27;bike number&#x27;</tspan><tspan stroke="#2a2a2a">].str.</tspan><tspan fill="#2f63b6" stroke="#2f63b6">contains</tspan><tspan stroke="#2a2a2a">(</tspan><tspan fill="#b22b2b" stroke="#b22b2b">&#x27;&gt;&#x27;</tspan><tspan stroke="#2a2a2a">, na</tspan><tspan fill="#8a4dff" stroke="#8a4dff" font-weight="bold">=</tspan><tspan fill="#2e7d32" stroke="#2e7d32" font-weight="bold">False</tspan><tspan stroke="#2a2a2a">, regex</tspan><tspan fill="#8a4dff" stroke="#8a4dff" font-weight="bold">=</tspan><tspan fill="#2e7d32" stroke="#2e7d32" font-weight="bold">False</tspan><tspan stroke="#2a2a2a">)]</tspan></text>
</svg>
</body></html>
